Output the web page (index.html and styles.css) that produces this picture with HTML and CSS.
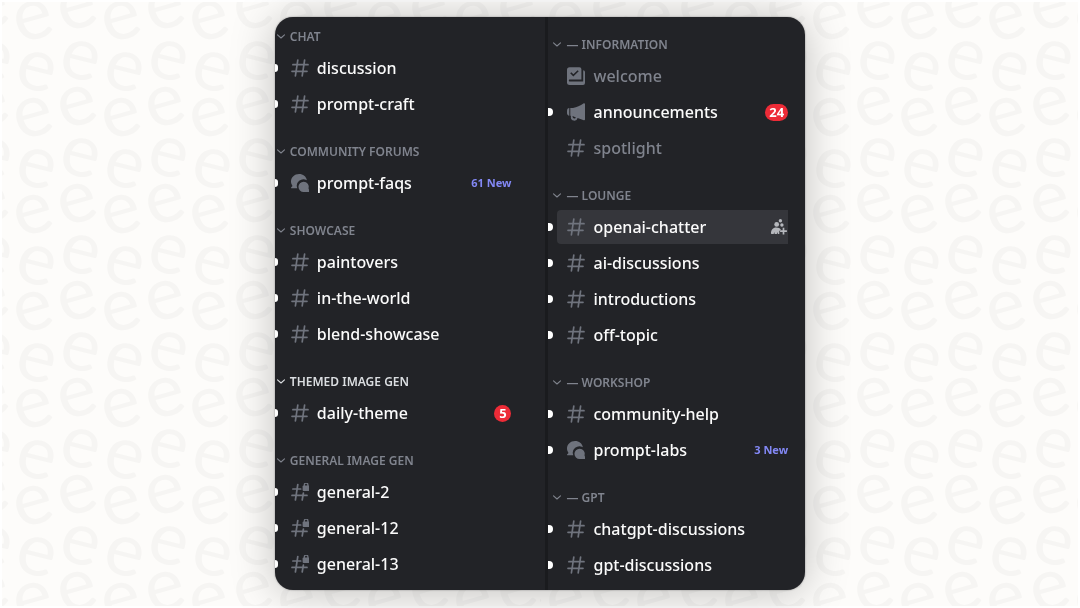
FILE: index.html
```html
<!DOCTYPE html>
<html lang="en">
<head>
<meta charset="utf-8">
<meta name="viewport" content="width=device-width, initial-scale=1">
<title>Channels</title>
<link rel="stylesheet" href="styles.css">
</head>
<body>
<svg class="backdrop" aria-hidden="true">
  <defs>
    <g id="letters" class="letters">
      <text transform="translate(31 18) rotate(-16)" y="19">e</text>
      <text transform="translate(75 7) rotate(-16)" y="19">e</text>
      <text transform="translate(34 69) rotate(14)" y="19">e</text>
      <text transform="translate(78 58) rotate(14)" y="19">e</text>
    </g>
    <pattern id="tile-left" width="88" height="97" patternUnits="userSpaceOnUse">
      <use href="#letters"/><use href="#letters" x="-88"/><use href="#letters" y="97"/><use href="#letters" x="-88" y="97"/>
    </pattern>
    <pattern id="tile-right" width="88" height="97" patternUnits="userSpaceOnUse" patternTransform="translate(5 0)">
      <use href="#letters"/><use href="#letters" x="-88"/><use href="#letters" y="97"/><use href="#letters" x="-88" y="97"/>
    </pattern>
  </defs>
  <rect width="50%" height="100%" fill="url(#tile-left)"/>
  <rect x="50%" width="50%" height="100%" fill="url(#tile-right)"/>
</svg>

<svg class="sprite" aria-hidden="true">
  <symbol id="chevron" viewBox="0 0 8 8"><path d="M.5 2.800 4 6 7.500 2.800" fill="none" stroke="currentColor" stroke-width="1.1" stroke-linecap="round" stroke-linejoin="round"/></symbol>
  <symbol id="hash" viewBox="0 0 18 18"><path d="M6.800 1.200 4.400 16.800M13.600 1.200 11.200 16.800M1.900 5.700H17M1 12.300H16" fill="none" stroke="currentColor" stroke-width="1.700" stroke-linecap="round"/></symbol>
  <symbol id="hash-lock" viewBox="0 0 18 18"><path d="M6.800 1.500 4.400 17M12.400 10 11.200 17M1.900 6H9.700M1 12.400H16" fill="none" stroke="currentColor" stroke-width="1.700" stroke-linecap="round"/><path d="M13.300 3.200V1.800a1.800 1.800 0 0 1 3.600 0v1.400" fill="none" stroke="currentColor" stroke-width="1.300"/><rect x="11.600" y="2.400" width="7" height="5.600" rx="1" fill="currentColor"/></symbol>
  <symbol id="forum" viewBox="0 0 18 18"><path d="M8.100 0C12 0 15.300 2.500 15.800 6.200A6.600 6.600 0 0 0 6.300 14.300H.7C0 14.300-.2 13.600.3 13.200L1.500 12C.5 10.600 0 9.300 0 7.600 0 3.300 3.600 0 8.100 0Z" fill="currentColor"/><path d="M12.600 7.700a5 5 0 0 1 4.900 6.500l.9 2.900c.2.600-.1.900-.6.900h-5.200a5.150 5.150 0 0 1 0-10.300Z" fill="currentColor"/></symbol>
  <symbol id="rules" viewBox="0 0 18 18"><path fill-rule="evenodd" d="M2.600.2H12.400a2 2 0 0 1 2 2V12.600H2.600c-1 0-1.100 1.900 0 1.900H15.600a.6.600 0 0 0 .6-.6V3.200c1 .2 1.800.8 1.800 1.800v11a2 2 0 0 1-2 2H2.600A2.600 2.600 0 0 1 0 15.200V2.800A2.600 2.600 0 0 1 2.600.2ZM3.200 6.300 6.300 9.600 11.700 4.300 10.600 3.200 6.400 7.200 4.300 5.200Z" fill="currentColor"/></symbol>
  <symbol id="megaphone" viewBox="0 0 18 18"><path fill-rule="evenodd" d="M16.800.2C17.500 0 18 .4 18 1V16.400c0 .6-.5 1-1.200.8L10.600 15a3.400 3.400 0 0 1-6.700-1.100V12.700H3.300V4.900H6C10 4.300 13 2.600 16.800.2ZM5.600 13v.8a1.700 1.700 0 0 0 3.300.6L5.600 13Z" fill="currentColor"/><path d="M2.300 4.900V12.700C.8 12.500 0 11.500 0 10V7.600C0 6.100.8 5.100 2.300 4.900Z" fill="currentColor"/></symbol>
  <symbol id="invite" viewBox="0 0 16 16"><g fill="currentColor"><circle cx="9.400" cy="1.800" r="1.700"/><circle cx="5.700" cy="5.400" r="2.400"/><circle cx="10.900" cy="6" r="1.700"/><path d="M0 14.500C0 11 1.900 8.600 5.200 8.600c2.300 0 3.900.8 4.700 2.200L8.300 12v2.900H6.900l-.7-1.800-.3 1.800H3.600l-.3-1.800-.6 1.800H.4Z"/></g><path d="M12.500 8.800v6.800M9.100 12.200h6.800" stroke="currentColor" stroke-width="1.700" fill="none"/></symbol>
</svg>

<main class="panel">
  <nav class="column column-left" aria-label="Image channels">
    <section class="group">
      <button class="heading" type="button"><svg class="chevron"><use href="#chevron"/></svg>CHAT</button>
      <ul class="channels">
        <li class="unread"><a class="channel" href="#discussion"><svg class="icon"><use href="#hash"/></svg><span class="name">discussion</span></a></li>
        <li class="unread"><a class="channel" href="#prompt-craft"><svg class="icon"><use href="#hash"/></svg><span class="name">prompt-craft</span></a></li>
      </ul>
    </section>
    <section class="group">
      <button class="heading" type="button"><svg class="chevron"><use href="#chevron"/></svg>COMMUNITY FORUMS</button>
      <ul class="channels">
        <li class="unread"><a class="channel" href="#prompt-faqs"><svg class="icon"><use href="#forum"/></svg><span class="name">prompt-faqs</span><span class="new">61 New</span></a></li>
      </ul>
    </section>
    <section class="group">
      <button class="heading" type="button"><svg class="chevron"><use href="#chevron"/></svg>SHOWCASE</button>
      <ul class="channels">
        <li class="unread"><a class="channel" href="#paintovers"><svg class="icon"><use href="#hash"/></svg><span class="name">paintovers</span></a></li>
        <li class="unread"><a class="channel" href="#in-the-world"><svg class="icon"><use href="#hash"/></svg><span class="name">in-the-world</span></a></li>
        <li class="unread"><a class="channel" href="#blend-showcase"><svg class="icon"><use href="#hash"/></svg><span class="name">blend-showcase</span></a></li>
      </ul>
    </section>
    <section class="group">
      <button class="heading heading-active" type="button"><svg class="chevron"><use href="#chevron"/></svg>THEMED IMAGE GEN</button>
      <ul class="channels">
        <li class="unread"><a class="channel" href="#daily-theme"><svg class="icon"><use href="#hash"/></svg><span class="name">daily-theme</span><span class="badge">5</span></a></li>
      </ul>
    </section>
    <section class="group">
      <button class="heading" type="button"><svg class="chevron"><use href="#chevron"/></svg>GENERAL IMAGE GEN</button>
      <ul class="channels">
        <li class="unread"><a class="channel" href="#general-2"><svg class="icon"><use href="#hash-lock"/></svg><span class="name">general-2</span></a></li>
        <li class="unread"><a class="channel" href="#general-12"><svg class="icon"><use href="#hash-lock"/></svg><span class="name">general-12</span></a></li>
        <li class="unread"><a class="channel" href="#general-13"><svg class="icon"><use href="#hash-lock"/></svg><span class="name">general-13</span></a></li>
      </ul>
    </section>
  </nav>

  <nav class="column column-right" aria-label="Community channels">
    <section class="group">
      <button class="heading" type="button"><svg class="chevron"><use href="#chevron"/></svg>— INFORMATION</button>
      <ul class="channels">
        <li><a class="channel" href="#welcome"><svg class="icon"><use href="#rules"/></svg><span class="name">welcome</span></a></li>
        <li class="unread"><a class="channel" href="#announcements"><svg class="icon"><use href="#megaphone"/></svg><span class="name">announcements</span><span class="badge">24</span></a></li>
        <li><a class="channel" href="#spotlight"><svg class="icon"><use href="#hash"/></svg><span class="name">spotlight</span></a></li>
      </ul>
    </section>
    <section class="group">
      <button class="heading" type="button"><svg class="chevron"><use href="#chevron"/></svg>— LOUNGE</button>
      <ul class="channels">
        <li class="unread selected"><a class="channel" href="#openai-chatter"><svg class="icon"><use href="#hash"/></svg><span class="name">openai-chatter</span><svg class="invite" role="img" aria-label="Create invite"><use href="#invite"/></svg></a></li>
        <li class="unread"><a class="channel" href="#ai-discussions"><svg class="icon"><use href="#hash"/></svg><span class="name">ai-discussions</span></a></li>
        <li class="unread"><a class="channel" href="#introductions"><svg class="icon"><use href="#hash"/></svg><span class="name">introductions</span></a></li>
        <li class="unread"><a class="channel" href="#off-topic"><svg class="icon"><use href="#hash"/></svg><span class="name">off-topic</span></a></li>
      </ul>
    </section>
    <section class="group">
      <button class="heading" type="button"><svg class="chevron"><use href="#chevron"/></svg>— WORKSHOP</button>
      <ul class="channels">
        <li class="unread"><a class="channel" href="#community-help"><svg class="icon"><use href="#hash"/></svg><span class="name">community-help</span></a></li>
        <li class="unread"><a class="channel" href="#prompt-labs"><svg class="icon"><use href="#forum"/></svg><span class="name">prompt-labs</span><span class="new">3 New</span></a></li>
      </ul>
    </section>
    <section class="group">
      <button class="heading" type="button"><svg class="chevron"><use href="#chevron"/></svg>— GPT</button>
      <ul class="channels">
        <li class="unread"><a class="channel" href="#chatgpt-discussions"><svg class="icon"><use href="#hash"/></svg><span class="name">chatgpt-discussions</span></a></li>
        <li class="unread"><a class="channel" href="#gpt-discussions"><svg class="icon"><use href="#hash"/></svg><span class="name">gpt-discussions</span></a></li>
      </ul>
    </section>
  </nav>
</main>
</body>
</html>
```

FILE: styles.css
```css
* {
  box-sizing: border-box;
}

body {
  margin: 0;
  min-height: 100vh;
  padding: 17px 0;
  background: #fdfcfa;
  font-family: "Noto Sans", "Open Sans", sans-serif;
}

.backdrop {
  position: fixed;
  inset: 0;
  width: 100%;
  height: 100%;
  border: 2px solid #ffffff;
}

.letters {
  fill: #f6f5f3;
  font: 400 74px Lato, sans-serif;
  text-anchor: middle;
}

.sprite {
  display: none;
}

.panel {
  position: relative;
  width: 49.1%;
  min-width: 480px;
  margin: 0 auto;
  display: grid;
  grid-template-columns: 271fr 260fr;
  border-radius: 18px;
  overflow: hidden;
  background: #222327;
  box-shadow: 0 0 2px rgba(0, 0, 0, 0.4), 0 2px 44px rgba(0, 0, 0, 0.25);
}

.column {
  display: flex;
  flex-direction: column;
  gap: 15px;
}

.column-left {
  --inset: 6px;
  --pill: 3px;
  padding: 5px 34px 8px 0;
}

.column-right {
  --inset: 9px;
  --pill: 5px;
  padding: 13px 17px 7px 0;
  border-left: 3px solid #1a1b1e;
}

.heading {
  display: flex;
  align-items: center;
  gap: 5px;
  width: 100%;
  height: 28px;
  padding: 0 0 0 calc(var(--inset) - 4px);
  border: 0;
  background: none;
  color: #80848e;
  font: 600 12px "Noto Sans", "Open Sans", sans-serif;
  text-align: left;
  white-space: nowrap;
}

.heading-active {
  color: #dbdee1;
}

.chevron {
  width: 8px;
  height: 8px;
}

.channels {
  margin: 0;
  padding: 0;
  list-style: none;
}

.channels li {
  position: relative;
  padding: 1px 0 1px var(--inset);
}

.unread::before {
  content: "";
  position: absolute;
  left: 0;
  top: 14px;
  width: var(--pill);
  height: 8px;
  border-radius: 0 4px 4px 0;
  background: #ffffff;
}

.channel {
  display: flex;
  align-items: center;
  height: 34px;
  padding-left: 10px;
  border-radius: 4px 0 0 4px;
  color: #80848e;
  font-size: 16px;
  font-weight: 500;
  line-height: 20px;
  text-decoration: none;
  white-space: nowrap;
}

.selected .channel {
  background: #35363b;
}

.icon {
  flex: none;
  width: 18px;
  height: 18px;
  margin-right: 8px;
  color: #6f737d;
  overflow: visible;
}

.name {
  flex: 1;
}

.unread .name {
  color: #fbfbfb;
}

.new {
  color: #8388f5;
  font-size: 11px;
  font-weight: 700;
}

.badge {
  min-width: 17px;
  height: 17px;
  padding: 0 4px;
  border-radius: 9px;
  background: #ed2b37;
  color: #ffffff;
  font-size: 13px;
  font-weight: 700;
  line-height: 17px;
  text-align: center;
}

.invite {
  width: 16px;
  height: 16px;
  margin-right: 1px;
  color: #b5b7bc;
}
```
